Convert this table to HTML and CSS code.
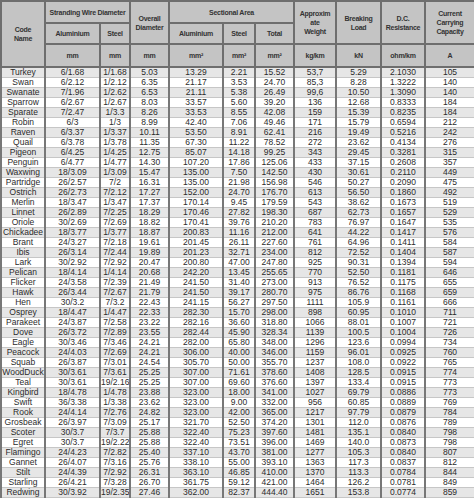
FILE: index.html
```html
<!DOCTYPE html>
<html lang="en">
<head>
<meta charset="utf-8">
<title>ACSR Conductor Table</title>
<link rel="stylesheet" href="styles.css">
</head>
<body>
<table class="spec">
<colgroup>
<col class="c-code"><col class="c-alw"><col class="c-stw"><col class="c-od"><col class="c-ala"><col class="c-sta"><col class="c-tot"><col class="c-wt"><col class="c-bl"><col class="c-dc"><col class="c-cc">
</colgroup>
<thead>
<tr class="h1">
<th rowspan="3">Code<br>Name</th>
<th colspan="2">Stranding Wire Diameter</th>
<th rowspan="2">Overall<br>Diameter</th>
<th colspan="3">Sectional Area</th>
<th rowspan="2">Approxim<br>ate<br>Weight</th>
<th rowspan="2">Breaking<br>Load</th>
<th rowspan="2">D.C.<br>Resistance</th>
<th rowspan="2">Current<br>Carrying<br>Capacity</th>
</tr>
<tr class="h2">
<th>Aluminium</th><th>Steel</th><th>Aluminium</th><th>Steel</th><th>Total</th>
</tr>
<tr class="h3">
<th>mm</th><th>mm</th><th>mm</th><th>mm²</th><th>mm²</th><th>mm²</th><th>kg/km</th><th>kN</th><th>ohm/km</th><th>A</th>
</tr>
</thead>
<tbody>
<tr><td>Turkey</td><td>6/1.68</td><td>1/1.68</td><td>5.03</td><td>13.29</td><td>2.21</td><td>15.52</td><td>53,7</td><td>5.29</td><td>2.1030</td><td>105</td></tr>
<tr><td>Swan</td><td>6/2.12</td><td>1/2.12</td><td>6.35</td><td>21.17</td><td>3.53</td><td>24.70</td><td>85,3</td><td>8.28</td><td>1.3222</td><td>140</td></tr>
<tr><td>Swanate</td><td>7/1.96</td><td>1/2.62</td><td>6.53</td><td>21.11</td><td>5.38</td><td>26.49</td><td>99,6</td><td>10.50</td><td>1.3090</td><td>140</td></tr>
<tr><td>Sparrow</td><td>6/2.67</td><td>1/2.67</td><td>8.03</td><td>33.57</td><td>5.60</td><td>39.20</td><td>136</td><td>12.68</td><td>0.8333</td><td>184</td></tr>
<tr><td>Sparate</td><td>7/2.47</td><td>1/3.3</td><td>8.26</td><td>33.53</td><td>8.55</td><td>42.08</td><td>159</td><td>15.39</td><td>0.8235</td><td>184</td></tr>
<tr><td>Robin</td><td>6/3</td><td>1/3</td><td>8.99</td><td>42.40</td><td>7.06</td><td>49.46</td><td>171</td><td>15.79</td><td>0.6594</td><td>212</td></tr>
<tr><td>Raven</td><td>6/3.37</td><td>1/3.37</td><td>10.11</td><td>53.50</td><td>8.91</td><td>62.41</td><td>216</td><td>19.49</td><td>0.5216</td><td>242</td></tr>
<tr><td>Quail</td><td>6/3.78</td><td>1/3.78</td><td>11.35</td><td>67.30</td><td>11.22</td><td>78.52</td><td>272</td><td>23.62</td><td>0.4134</td><td>276</td></tr>
<tr><td>Pigeon</td><td>6/4.25</td><td>1/4.25</td><td>12.75</td><td>85.07</td><td>14.18</td><td>99.25</td><td>343</td><td>29.45</td><td>0.3281</td><td>315</td></tr>
<tr><td>Penguin</td><td>6/4.77</td><td>1/4.77</td><td>14.30</td><td>107.20</td><td>17.86</td><td>125.06</td><td>433</td><td>37.15</td><td>0.2608</td><td>357</td></tr>
<tr><td>Waxwing</td><td>18/3.09</td><td>1/3.09</td><td>15.47</td><td>135.00</td><td>7.50</td><td>142.50</td><td>430</td><td>30.61</td><td>0.2110</td><td>449</td></tr>
<tr><td>Partridge</td><td>26/2.57</td><td>7/2</td><td>16.31</td><td>135.00</td><td>21.98</td><td>156.98</td><td>546</td><td>50.27</td><td>0.2090</td><td>475</td></tr>
<tr><td>Ostrich</td><td>26/2.73</td><td>7/2.12</td><td>17.27</td><td>152.00</td><td>24.70</td><td>176.70</td><td>613</td><td>56.50</td><td>0.1860</td><td>492</td></tr>
<tr><td>Merlin</td><td>18/3.47</td><td>1/3.47</td><td>17.37</td><td>170.14</td><td>9.45</td><td>179.59</td><td>543</td><td>38.62</td><td>0.1673</td><td>519</td></tr>
<tr><td>Linnet</td><td>26/2.89</td><td>7/2.25</td><td>18.29</td><td>170.46</td><td>27.82</td><td>198.30</td><td>687</td><td>62.73</td><td>0.1657</td><td>529</td></tr>
<tr><td>Oriole</td><td>30/2.69</td><td>7/2.69</td><td>18.82</td><td>170.41</td><td>39.76</td><td>210.20</td><td>783</td><td>76.97</td><td>0.1647</td><td>535</td></tr>
<tr><td>Chickadee</td><td>18/3.77</td><td>1/3.77</td><td>18.87</td><td>200.83</td><td>11.16</td><td>212.00</td><td>641</td><td>44.22</td><td>0.1417</td><td>576</td></tr>
<tr><td>Brant</td><td>24/3.27</td><td>7/2.18</td><td>19.61</td><td>201.45</td><td>26.11</td><td>227.60</td><td>761</td><td>64.96</td><td>0.1411</td><td>584</td></tr>
<tr><td>Ibis</td><td>26/3.14</td><td>7/2.44</td><td>19.89</td><td>201.23</td><td>32.71</td><td>234.00</td><td>812</td><td>72.52</td><td>0.1404</td><td>587</td></tr>
<tr><td>Lark</td><td>30/2.92</td><td>7/2.92</td><td>20.47</td><td>200.80</td><td>47.00</td><td>247.80</td><td>925</td><td>90.31</td><td>0.1394</td><td>594</td></tr>
<tr><td>Pelican</td><td>18/4.14</td><td>1/4.14</td><td>20.68</td><td>242.20</td><td>13.45</td><td>255.65</td><td>770</td><td>52.50</td><td>0.1181</td><td>646</td></tr>
<tr><td>Flicker</td><td>24/3.58</td><td>7/2.39</td><td>21.49</td><td>241.50</td><td>31.40</td><td>273.00</td><td>913</td><td>76.52</td><td>0.1175</td><td>655</td></tr>
<tr><td>Hawk</td><td>26/3.44</td><td>7/2.67</td><td>21.79</td><td>241.50</td><td>39.17</td><td>280.70</td><td>975</td><td>86.76</td><td>0.1168</td><td>659</td></tr>
<tr><td>Hen</td><td>30/3.2</td><td>7/3.2</td><td>22.43</td><td>241.15</td><td>56.27</td><td>297.50</td><td>1111</td><td>105.9</td><td>0.1161</td><td>666</td></tr>
<tr><td>Osprey</td><td>18/4.47</td><td>1/4.47</td><td>22.33</td><td>282.30</td><td>15.70</td><td>298.00</td><td>898</td><td>60.95</td><td>0.1010</td><td>711</td></tr>
<tr><td>Parakeet</td><td>24/3.87</td><td>7/2.58</td><td>23.22</td><td>282.16</td><td>36.60</td><td>318.80</td><td>1066</td><td>88.01</td><td>0.1007</td><td>721</td></tr>
<tr><td>Dove</td><td>26/3.72</td><td>7/2.89</td><td>23.55</td><td>282.44</td><td>45.90</td><td>328.34</td><td>1139</td><td>100.5</td><td>0.1004</td><td>726</td></tr>
<tr><td>Eagle</td><td>30/3.46</td><td>7/3.46</td><td>24.21</td><td>282.00</td><td>65.80</td><td>348.00</td><td>1296</td><td>123.6</td><td>0.0994</td><td>734</td></tr>
<tr><td>Peacock</td><td>24/4.03</td><td>7/2.69</td><td>24.21</td><td>306.00</td><td>40.00</td><td>346.00</td><td>1159</td><td>96.01</td><td>0.0925</td><td>760</td></tr>
<tr><td>Squab</td><td>26/3.87</td><td>7/3.01</td><td>24.54</td><td>305.70</td><td>50.00</td><td>355.70</td><td>1237</td><td>108.0</td><td>0.0922</td><td>765</td></tr>
<tr><td>WoodDuck</td><td>30/3.61</td><td>7/3.61</td><td>25.25</td><td>307.00</td><td>71.61</td><td>378.60</td><td>1408</td><td>128.5</td><td>0.0915</td><td>774</td></tr>
<tr><td>Teal</td><td>30/3.61</td><td>19/2.16</td><td>25.25</td><td>307.00</td><td>69.60</td><td>376.60</td><td>1397</td><td>133.4</td><td>0.0915</td><td>773</td></tr>
<tr><td>Kingbird</td><td>18/4.78</td><td>1/4.78</td><td>23.88</td><td>323.00</td><td>18.00</td><td>341.00</td><td>1027</td><td>69.79</td><td>0.0886</td><td>773</td></tr>
<tr><td>Swift</td><td>36/3.38</td><td>1/3.38</td><td>23.62</td><td>323.00</td><td>9.00</td><td>332.00</td><td>956</td><td>60.85</td><td>0.0889</td><td>769</td></tr>
<tr><td>Rook</td><td>24/4.14</td><td>7/2.76</td><td>24.82</td><td>323.00</td><td>42.00</td><td>365.00</td><td>1217</td><td>97.79</td><td>0.0879</td><td>784</td></tr>
<tr><td>Grosbeak</td><td>26/3.97</td><td>7/3.09</td><td>25.17</td><td>321.70</td><td>52.50</td><td>374.20</td><td>1301</td><td>112.0</td><td>0.0876</td><td>789</td></tr>
<tr><td>Scoter</td><td>30/3.7</td><td>7/3.7</td><td>25.88</td><td>322.40</td><td>75.23</td><td>397.60</td><td>1481</td><td>135.1</td><td>0.0840</td><td>798</td></tr>
<tr><td>Egret</td><td>30/3.7</td><td>19/2.22</td><td>25.88</td><td>322.40</td><td>73.51</td><td>396.00</td><td>1469</td><td>140.0</td><td>0.0873</td><td>798</td></tr>
<tr><td>Flamingo</td><td>24/4.23</td><td>7/2.82</td><td>25.40</td><td>337.10</td><td>43.70</td><td>381.00</td><td>1277</td><td>105.3</td><td>0.0840</td><td>807</td></tr>
<tr><td>Gannet</td><td>26/4.07</td><td>7/3.16</td><td>25.76</td><td>338.10</td><td>55.00</td><td>393.10</td><td>1363</td><td>117.3</td><td>0.0837</td><td>812</td></tr>
<tr><td>Stilt</td><td>24/4.39</td><td>7/2.92</td><td>26.31</td><td>363.10</td><td>46.85</td><td>410.00</td><td>1370</td><td>113.3</td><td>0.0784</td><td>844</td></tr>
<tr><td>Starling</td><td>26/4.21</td><td>7/3.28</td><td>26.70</td><td>361.75</td><td>59.12</td><td>421.00</td><td>1464</td><td>126.2</td><td>0.0781</td><td>849</td></tr>
<tr><td>Redwing</td><td>30/3.92</td><td>19/2.35</td><td>27.46</td><td>362.00</td><td>82.37</td><td>444.40</td><td>1651</td><td>153.8</td><td>0.0774</td><td>859</td></tr>
</tbody>
</table>
</body>
</html>
```
FILE: styles.css
```css
html, body {
  margin: 0;
  padding: 0;
  background: #ffffff;
}

.spec {
  border-collapse: collapse;
  table-layout: fixed;
  width: 474px;
  font-family: "Liberation Sans", Arial, sans-serif;
  color: #2b2b2b;
}

.c-code { width: 44px; }
.c-alw { width: 55px; }
.c-stw { width: 30px; }
.c-od { width: 39px; }
.c-ala { width: 54px; }
.c-sta { width: 32px; }
.c-tot { width: 39px; }
.c-wt { width: 42px; }
.c-bl { width: 45px; }
.c-dc { width: 44px; }
.c-cc { width: 50px; }

.spec th {
  background: #c4c4c4;
  border: 2px solid #6e6e6e;
  padding: 0;
  font-weight: bold;
  font-size: 7px;
  line-height: 9px;
  letter-spacing: -0.25px;
  text-align: center;
  vertical-align: middle;
  color: #333333;
}

.spec .h1 { height: 22px; }
.spec .h2 { height: 21px; }
.spec .h3 { height: 23px; }

.spec tbody tr { height: 10px; }

.spec tbody tr:nth-child(odd) td { background: #e6e6e6; }

.spec td {
  padding: 0;
  height: 9px;
  font-size: 8.5px;
  line-height: 9px;
  text-align: center;
  vertical-align: middle;
  white-space: nowrap;
  overflow: hidden;
  border-left: 2px solid #777777;
  border-right: 2px solid #777777;
  border-bottom: 1px solid #c6c6c6;
}
```
